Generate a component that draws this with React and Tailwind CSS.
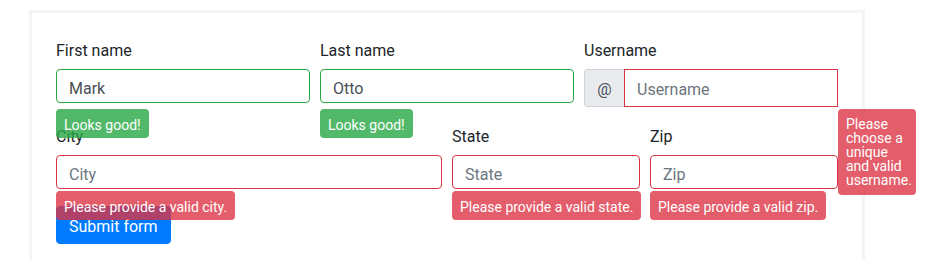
import React from "react";

const inputBase =
  "w-full h-[34px] px-3 pt-[4px] text-base text-[#495057] bg-white border rounded outline-none placeholder:text-[#6c757d]";

const labelCls = "pt-[2px] mb-[6px] leading-6 text-[#212529]";

function Tooltip({ ok, children, className = "" }) {
  return (
    <div
      className={`absolute top-full mt-[1.6px] z-10 px-2 pt-[6px] pb-[2px] whitespace-nowrap text-[14px] leading-[21px] text-white rounded ${
        ok ? "bg-[#28a745]/80" : "bg-[#dc3545]/80"
      } ${className}`}
    >
      {children}
    </div>
  );
}

function Field({ label, value, placeholder, ok, tip, span = "" }) {
  return (
    <div className={`relative flex flex-col ${span}`}>
      <label className={labelCls}>{label}</label>
      <input
        className={`${inputBase} ${ok ? "border-[#28a745]" : "border-[#dc3545]"}`}
        defaultValue={value}
        placeholder={placeholder}
      />
      <Tooltip ok={ok} className="left-0">
        {tip}
      </Tooltip>
    </div>
  );
}

export default function App() {
  return (
    <div className="min-h-screen bg-white pt-[10px] pl-[29px] font-[Roboto,sans-serif] text-base">
      <div className="w-[836px] border-[3px] border-[#f4f4f4] p-6">
        <form onSubmit={(e) => e.preventDefault()}>
          {/* first row */}
          <div className="grid grid-cols-3 gap-x-[10px] mb-4">
            <Field label="First name" value="Mark" ok tip="Looks good!" />
            <Field label="Last name" value="Otto" ok tip="Looks good!" />
            <div className="relative flex flex-col">
              <label className={labelCls}>Username</label>
              <div className="flex h-[38px]">
                <span className="flex items-center justify-center w-[40px] pt-[3px] bg-[#e9ecef] border border-r-0 border-[#ced4da] rounded-l text-[#495057]">
                  @
                </span>
                <input
                  className="flex-1 min-w-0 h-full px-3 pt-[3px] text-base text-[#495057] bg-white border border-[#dc3545] outline-none placeholder:text-[#6c757d]"
                  placeholder="Username"
                />
              </div>
              <div className="absolute top-full left-full mt-[1.6px] z-10 w-[78px] px-2 py-2 text-[14px] leading-[14px] text-white rounded bg-[#dc3545]/80">
                Please choose a unique and valid username.
              </div>
            </div>
          </div>

          {/* second row */}
          <div className="grid grid-cols-4 gap-x-[10px] mb-[17px]">
            <Field label="City" placeholder="City" tip="Please provide a valid city." span="col-span-2" />
            <Field label="State" placeholder="State" tip="Please provide a valid state." />
            <Field label="Zip" placeholder="Zip" tip="Please provide a valid zip." />
          </div>

          <button
            type="submit"
            className="h-[38px] px-3 pt-[4px] bg-[#007bff] text-white rounded border border-[#007bff] leading-6"
          >
            Submit form
          </button>
        </form>
      </div>
    </div>
  );
}
